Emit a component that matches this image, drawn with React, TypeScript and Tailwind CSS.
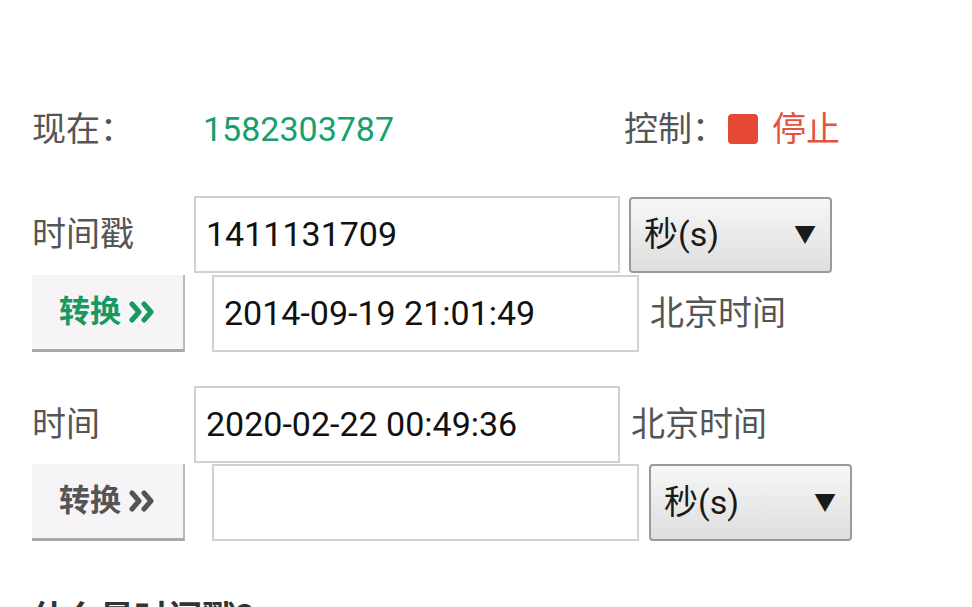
// @ts-nocheck

const font = { fontFamily: 'Roboto, "Noto Sans CJK SC", sans-serif' };

function Select({ className }: any) {
  return (
    <div
      className={
        "flex h-[76px] w-[203px] items-center justify-between rounded-[4px] border-2 border-[#9a9a9a] bg-gradient-to-b from-[#f7f7f7] to-[#dedede] pl-[13px] pr-[14px] text-[34px] text-[#1a1a1a] " +
        (className ?? "")
      }
    >
      <span>秒(s)</span>
      <span className="text-[22px]">▼</span>
    </div>
  );
}

function Chevrons() {
  return (
    <svg width="27" height="22" viewBox="0 0 27 22" className="ml-[8px]">
      <path d="M3 3 L10 11 L3 19 M15 3 L22 11 L15 19" fill="none" stroke="currentColor" strokeWidth="5" strokeLinecap="round" strokeLinejoin="round" />
    </svg>
  );
}

function ConvertButton({ active }: any) {
  return (
    <button
      className={
        "flex h-[77px] w-[153px] shrink-0 items-center justify-center border-r-2 border-b-[3px] border-r-[#b9b9b9] border-b-[#a9a9a9] bg-[#f6f4f6] text-[31px] font-bold " +
        (active ? "text-[#17995f]" : "text-[#555555]")
      }
    >
      转换
      <Chevrons />
    </button>
  );
}

function Field({ value, className }: any) {
  return (
    <div
      className={
        "flex h-[77px] items-center border-2 border-[#d2d2d2] bg-white pl-[10px] text-[34px] text-[#111111] " +
        (className ?? "")
      }
    >
      {value}
    </div>
  );
}

export default function App() {
  return (
    <div className="h-[607px] w-[972px] overflow-hidden bg-white pl-[32px]" style={font}>
      <div className="mt-[99px] flex h-[60px] items-center text-[34px]">
        <span className="w-[171px] text-[#555555]">现在：</span>
        <span className="text-[#17a06b]">1582303787</span>
        <span className="ml-[230px] text-[#555555]">控制：</span>
        <span className="ml-[2px] h-[30px] w-[30px] rounded-[4px] bg-[#e64a36]" />
        <span className="ml-[14px] text-[#e5533f]">停止</span>
      </div>

      <div className="mt-[37px] flex items-center">
        <span className="w-[162px] text-[34px] text-[#555555]">时间戳</span>
        <Field value="1411131709" className="h-[76px] w-[426px]" />
        <Select className="ml-[9px]" />
      </div>
      <div className="mt-[2px] flex items-center">
        <ConvertButton active />
        <Field value="2014-09-19 21:01:49" className="ml-[27px] w-[427px]" />
        <span className="ml-[11px] text-[34px] text-[#555555]">北京时间</span>
      </div>

      <div className="mt-[34px] flex items-center">
        <span className="w-[162px] text-[34px] text-[#555555]">时间</span>
        <Field value="2020-02-22 00:49:36" className="w-[426px]" />
        <span className="ml-[11px] text-[34px] text-[#555555]">北京时间</span>
      </div>
      <div className="mt-[1px] flex items-center">
        <ConvertButton />
        <Field value="" className="ml-[27px] w-[427px]" />
        <Select className="ml-[10px] h-[77px]" />
      </div>

      <h2 className="mt-[57px] text-[34px] font-bold leading-[1.2] text-[#333333]">什么是时间戳？</h2>
    </div>
  );
}
